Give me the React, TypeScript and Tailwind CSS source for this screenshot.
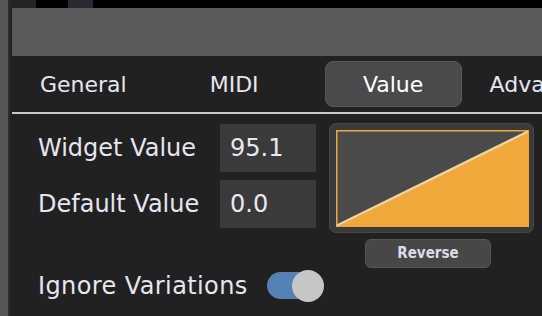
import React from "react";

const font = { fontFamily: '"DejaVu Sans", Verdana, sans-serif' };

function Field({ value }: { value: string }) {
  return (
    <div className="flex h-[48px] w-[96px] items-center bg-[#3a3a3a] pl-[10px] text-[24px] text-[#e8e8f0]">
      {value}
    </div>
  );
}

function CurvePlot() {
  return (
    <svg width="193" height="97" viewBox="0 0 193 97">
      <rect x="0" y="0" width="193" height="97" fill="#4a4a4a" />
      <polygon points="0,97 193,0 193,97" fill="#f0a83a" />
      <rect x="0.75" y="0.75" width="191.5" height="95.5" fill="none" stroke="#f0a83a" strokeWidth="1.5" />
      <line x1="2" y1="95" x2="191" y2="2" stroke="#ecd3a0" strokeWidth="2.5" strokeLinecap="round" />
    </svg>
  );
}

export default function App() {
  return (
    <div className="flex h-[316px] w-[542px] overflow-hidden bg-black" style={font}>
      <div className="w-[8px] shrink-0 bg-[#565656]" />
      <div className="w-[2px] shrink-0 bg-[#2c2c2c]" />
      <div className="flex min-w-0 flex-1 flex-col bg-[#212121]">
        {/* window chrome */}
        <div className="flex h-[8px] shrink-0 bg-black">
          <div className="w-[26px] bg-[#242427]" />
          <div className="ml-[32px] w-[25px] bg-[#2a2a30]" />
        </div>
        <div className="h-[48px] shrink-0 pl-[2px]">
          <div className="h-full bg-[#5a5a5a]" />
        </div>

        {/* tabs */}
        <div className="flex h-[56px] shrink-0 items-center overflow-hidden whitespace-nowrap pl-[30px] text-[22px] text-[#e6e6f0]">
          <span>General</span>
          <span className="ml-[83px]">MIDI</span>
          <div className="ml-[66px] flex h-[46px] w-[137px] shrink-0 items-center justify-center rounded-[8px] border border-[#585858] bg-[#4a4a4a] text-white">
            Value
          </div>
          <span className="ml-[28px]">Advanced</span>
        </div>
        <div className="ml-[2px] h-[2px] shrink-0 bg-[#c9c9d2]" />

        {/* value settings */}
        <div className="flex shrink-0 items-start">
          <div className="flex flex-col gap-[8px] pl-[28px] pt-[10px] text-[24px] text-[#e6e6f0]">
            <div className="flex items-center">
              <span className="w-[182px]">Widget Value</span>
              <Field value="95.1" />
            </div>
            <div className="flex items-center">
              <span className="w-[182px]">Default Value</span>
              <Field value="0.0" />
            </div>
          </div>
          <div className="ml-[13px] flex flex-col pt-[9px]">
            <div className="flex h-[110px] w-[205px] rounded-[7px] border border-[#474747] bg-[#3a3a3a] pl-[6px] pt-[6px]">
              <CurvePlot />
            </div>
            <div
              className="ml-[36px] mt-[6px] flex h-[29px] w-[126px] items-center justify-center rounded-[6px] border border-[#555] bg-[#474747] text-[15px] font-bold text-[#dcdce8]"
              style={{ fontFamily: '"DejaVu Sans Condensed", "DejaVu Sans", sans-serif' }}
            >
              Reverse
            </div>
          </div>
        </div>

        <div className="mt-[2px] flex h-[32px] shrink-0 items-center pl-[28px] text-[24px] text-[#e6e6f0]">
          <span className="w-[229px] tracking-[0.4px]">Ignore Variations</span>
          <div className="relative h-[32px] w-[56px]">
            <div className="absolute left-0 top-[2px] h-[27px] w-[48px] rounded-full bg-[#5582b5]" />
            <div className="absolute left-[25px] top-0 h-[32px] w-[32px] rounded-full bg-[#c6c6c6]" />
          </div>
        </div>
      </div>
    </div>
  );
}
